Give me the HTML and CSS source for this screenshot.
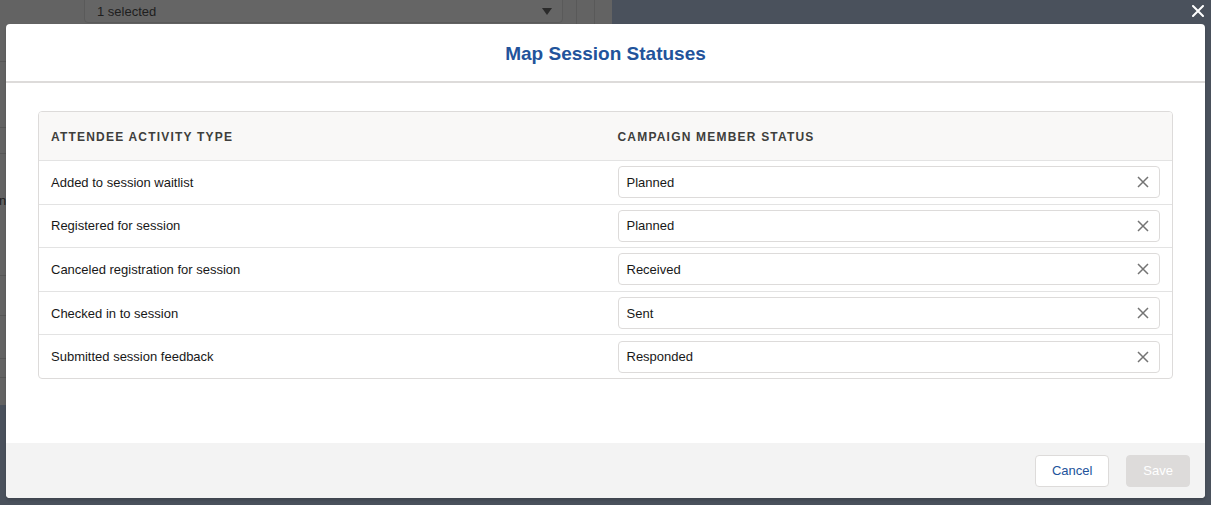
FILE: index.html
```html
<!DOCTYPE html>
<html>
<head>
  <meta charset="UTF-8">
  <title>Map Session Statuses</title>
  <link rel="stylesheet" href="styles.css">
</head>
<body>
  <!-- Dimmed page behind the modal -->
  <div class="app">
    <div class="app-main">
      <div class="picklist">
        <span>1 selected</span>
        <span class="caret"></span>
      </div>
      <div class="app-lines">
        <div class="app-line" style="height: 38px"></div>
        <div class="app-line" style="height: 65px"></div>
        <div class="app-line" style="height: 25px"></div>
        <div class="app-text">n</div>
        <div class="app-line" style="height: 57px"></div>
        <div class="app-line" style="height: 39px"></div>
        <div class="app-line" style="height: 42px"></div>
        <div class="app-line" style="height: 18px"></div>
      </div>
    </div>
    <div class="app-rail"></div>
    <div class="app-rail"></div>
  </div>

  <button class="backdrop-close" aria-label="Close">
    <svg width="12" height="12" viewBox="0 0 12 12" fill="none" stroke="currentColor" stroke-width="2" stroke-linecap="round">
      <path d="M1 1l10 10M11 1L1 11"></path>
    </svg>
  </button>

  <section class="modal">
    <header class="modal-header">
      <h2 class="modal-title">Map Session Statuses</h2>
    </header>

    <div class="modal-body">
      <div class="status-table">
        <div class="table-head">
          <div>Attendee Activity Type</div>
          <div>Campaign Member Status</div>
        </div>

        <div class="table-row">
          <div class="cell">Added to session waitlist</div>
          <div class="cell">
            <div class="status-input"><span>Planned</span>
              <svg class="clear-icon" width="12" height="12" viewBox="0 0 12 12" fill="none" stroke="currentColor" stroke-width="1.5"><path d="M1 1l10 10M11 1L1 11"></path></svg>
            </div>
          </div>
        </div>

        <div class="table-row">
          <div class="cell">Registered for session</div>
          <div class="cell">
            <div class="status-input"><span>Planned</span>
              <svg class="clear-icon" width="12" height="12" viewBox="0 0 12 12" fill="none" stroke="currentColor" stroke-width="1.5"><path d="M1 1l10 10M11 1L1 11"></path></svg>
            </div>
          </div>
        </div>

        <div class="table-row">
          <div class="cell">Canceled registration for session</div>
          <div class="cell">
            <div class="status-input"><span>Received</span>
              <svg class="clear-icon" width="12" height="12" viewBox="0 0 12 12" fill="none" stroke="currentColor" stroke-width="1.5"><path d="M1 1l10 10M11 1L1 11"></path></svg>
            </div>
          </div>
        </div>

        <div class="table-row">
          <div class="cell">Checked in to session</div>
          <div class="cell">
            <div class="status-input"><span>Sent</span>
              <svg class="clear-icon" width="12" height="12" viewBox="0 0 12 12" fill="none" stroke="currentColor" stroke-width="1.5"><path d="M1 1l10 10M11 1L1 11"></path></svg>
            </div>
          </div>
        </div>

        <div class="table-row">
          <div class="cell">Submitted session feedback</div>
          <div class="cell">
            <div class="status-input"><span>Responded</span>
              <svg class="clear-icon" width="12" height="12" viewBox="0 0 12 12" fill="none" stroke="currentColor" stroke-width="1.5"><path d="M1 1l10 10M11 1L1 11"></path></svg>
            </div>
          </div>
        </div>
      </div>
    </div>

    <footer class="modal-footer">
      <button class="btn btn-neutral">Cancel</button>
      <button class="btn btn-brand" disabled>Save</button>
    </footer>
  </section>
</body>
</html>
```

FILE: styles.css
```css
body {
  margin: 0;
  width: 1211px;
  height: 505px;
  overflow: hidden;
  position: relative;
  background-color: #4a515c;
  font-family: "Liberation Sans", Arial, sans-serif;
}

/* Page behind the backdrop */
.app {
  display: flex;
  width: 612px;
  height: 405px;
  background-color: #636363;
}
.app-main {
  flex: 1;
}
.app-rail {
  width: 17px;
  border-left: 1px solid #595959;
}
.picklist {
  display: flex;
  align-items: center;
  justify-content: space-between;
  margin: -4px 0 0 84px;
  width: 479px;
  height: 27px;
  box-sizing: border-box;
  padding: 3px 10px 0 12px;
  background-color: #656565;
  border: 1px solid #5a5a5a;
  border-radius: 4px;
  font-size: 13px;
  color: #1e1e1e;
}
.caret {
  width: 0;
  height: 0;
  border-left: 5px solid transparent;
  border-right: 5px solid transparent;
  border-top: 7px solid #2a2a2a;
}
.app-lines {
  width: 24px;
}
.app-line {
  border-bottom: 1px solid #575757;
}
.app-text {
  margin: 30px 0 0 -1px;
  height: 34px;
  line-height: 34px;
  font-size: 13px;
  color: #1e1e1e;
}

.backdrop-close {
  position: absolute;
  top: 5px;
  right: 7px;
  padding: 0;
  border: none;
  background: none;
  color: #fff;
  line-height: 0;
}

/* Modal */
.modal {
  position: absolute;
  left: 6px;
  top: 24px;
  width: 1199px;
  height: 474px;
  display: flex;
  flex-direction: column;
  background-color: #fff;
  border-radius: 4px;
  overflow: hidden;
  box-shadow: 0 2px 3px rgba(0, 0, 0, 0.16);
}
.modal-header {
  height: 57px;
  flex-shrink: 0;
  display: flex;
  align-items: center;
  justify-content: center;
  border-bottom: 2px solid #dddbda;
}
.modal-title {
  margin: 2px 0 0;
  font-size: 19px;
  font-weight: bold;
  color: #22539b;
}
.modal-body {
  flex: 1;
  padding: 28px 32px 0;
}
.status-table {
  border: 1px solid #dddbda;
  border-radius: 4px;
  overflow: hidden;
}
.table-head {
  display: grid;
  grid-template-columns: 1fr 1fr;
  align-items: center;
  height: 48px;
  padding-top: 1px;
  box-sizing: border-box;
  background-color: #f9f8f7;
}
.table-head div {
  padding: 0 12px;
  font-size: 12px;
  font-weight: bold;
  letter-spacing: 1.2px;
  text-transform: uppercase;
  color: #3e3e3c;
}
.table-row {
  display: grid;
  grid-template-columns: 1fr 1fr;
  align-items: center;
  height: 43.6px;
  box-sizing: border-box;
  border-top: 1px solid #e3e3e3;
}
.cell {
  padding: 0 12px;
  font-size: 13px;
  color: #181818;
}
.status-input {
  display: flex;
  align-items: center;
  justify-content: space-between;
  height: 32px;
  box-sizing: border-box;
  padding: 0 10px 0 8px;
  border: 1px solid #dddbda;
  border-radius: 4px;
}
.clear-icon {
  color: #747474;
}

.modal-footer {
  height: 55px;
  flex-shrink: 0;
  display: flex;
  align-items: center;
  justify-content: flex-end;
  gap: 17px;
  padding: 0 15px;
  background-color: #f3f3f3;
}
.btn {
  height: 32px;
  padding: 0 16px;
  border: 1px solid #dddbda;
  border-radius: 4px;
  font-family: inherit;
  font-size: 13px;
  cursor: pointer;
}
.btn-neutral {
  background-color: #fff;
  color: #22539b;
}
.btn-brand:disabled {
  background-color: #dddbda;
  border-color: #dddbda;
  color: #fff;
  cursor: default;
}
```
